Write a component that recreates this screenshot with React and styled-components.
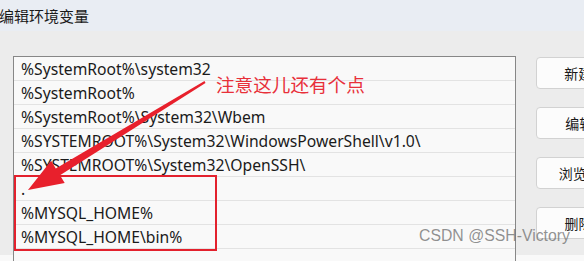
import React from 'react'
import styled, { createGlobalStyle } from 'styled-components'

const Global = createGlobalStyle`
  body {
    margin: 0;
    overflow: hidden;
    font-family: "Noto Sans", "Noto Sans CJK SC", sans-serif;
  }
`

const Page = styled.div`
  position: relative;
  width: 584px;
  height: 261px;
  display: flex;
  flex-direction: column;
  background: #f9f9f9;
  overflow: hidden;
`

const TitleBar = styled.div`
  height: 31px;
  flex-shrink: 0;
  background: #e9edf3;
  display: flex;
  align-items: center;
  margin-left: -1px;
  font-size: 15px;
  color: #1a1a1a;
  font-family: "Noto Sans CJK SC", sans-serif;
`

const Body = styled.div`
  height: 224px;
  flex-shrink: 0;
  background: #ececec;
  display: flex;
  align-items: flex-start;
  padding: 25px 0 0 13px;
  box-sizing: border-box;
`

const List = styled.div`
  width: 503px;
  height: 205px;
  flex-shrink: 0;
  box-sizing: border-box;
  border: 1px solid #878787;
  border-bottom: none;
  background: #f9f9f9;
  overflow: hidden;
`

const Row = styled.div`
  height: 23px;
  border-bottom: 1px solid #e3e3e3;
  display: flex;
  align-items: center;
  padding-left: 7px;
  font-size: 15.7px;
  color: #1b1b1b;
  white-space: nowrap;
`

const Buttons = styled.div`
  display: flex;
  flex-direction: column;
  gap: 18px;
  margin-left: 20px;
  padding-top: 1px;
`

const Button = styled.div`
  width: 104px;
  height: 32px;
  box-sizing: border-box;
  border: 1px solid #d2d2d2;
  border-radius: 4px;
  background: #fcfcfc;
  display: flex;
  align-items: center;
  justify-content: center;
  font-size: 14px;
  color: #1a1a1a;
  font-family: "Noto Sans CJK SC", sans-serif;
`

const Note = styled.div`
  position: absolute;
  left: 216px;
  top: 73px;
  font-size: 18.6px;
  line-height: 22px;
  color: #e8303a;
  font-family: "Noto Sans CJK SC", sans-serif;
`

const Box = styled.div`
  position: absolute;
  left: 14px;
  top: 175px;
  width: 203px;
  height: 76px;
  box-sizing: border-box;
  border: 2px solid #e3212d;
`

const Arrow = styled.svg`
  position: absolute;
  left: 0;
  top: 0;
  width: 584px;
  height: 261px;
  pointer-events: none;
`

const Watermark = styled.div`
  position: absolute;
  left: 419px;
  top: 226px;
  font-size: 15.8px;
  line-height: 20px;
  color: rgba(110, 110, 110, 0.75);
  font-family: "Liberation Sans", Arial, sans-serif;
  white-space: nowrap;
`

const paths = [
  '%SystemRoot%\\system32',
  '%SystemRoot%',
  '%SystemRoot%\\System32\\Wbem',
  '%SYSTEMROOT%\\System32\\WindowsPowerShell\\v1.0\\',
  '%SYSTEMROOT%\\System32\\OpenSSH\\',
  '.',
  '%MYSQL_HOME%',
  '%MYSQL_HOME\\bin%',
  '',
]

const actions = ['新建(N)', '编辑(E)', '浏览(B)...', '删除(D)']

export default function App() {
  return (
    <Page>
      <Global />
      <TitleBar>编辑环境变量</TitleBar>
      <Body>
        <List>
          {paths.map((p, i) => (
            <Row key={i}>{p}</Row>
          ))}
        </List>
        <Buttons>
          {actions.map((a) => (
            <Button key={a}>{a}</Button>
          ))}
        </Buttons>
      </Body>
      <Note>注意这儿还有个点</Note>
      <Box />
      <Arrow viewBox="0 0 584 261">
        <polygon
          points="205.5,83 60,175.2 64.7,182.9 28,190 51.1,160.7 55.8,168.4 204.5,81"
          fill="#e8202c"
        />
      </Arrow>
      <Watermark>CSDN @SSH-Victory</Watermark>
    </Page>
  )
}
